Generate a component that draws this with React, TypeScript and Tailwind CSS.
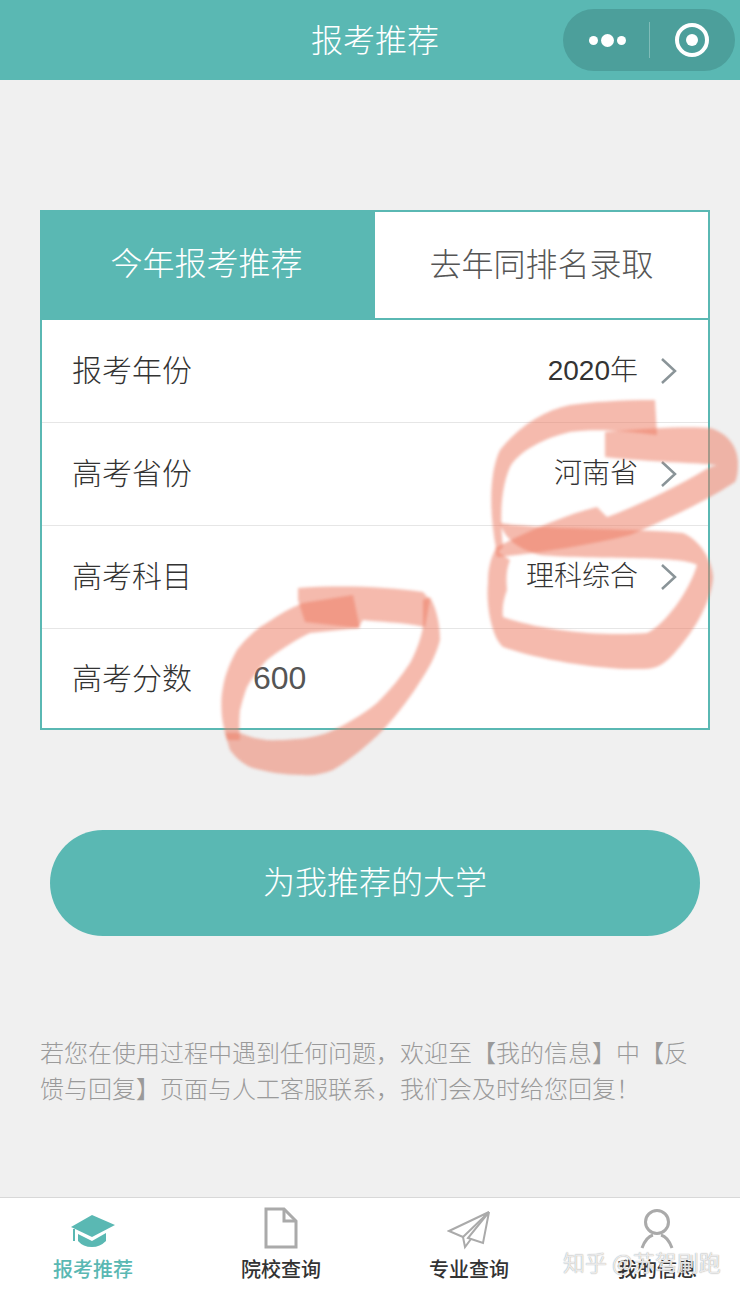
const rows = [
  { label: '报考年份', value: '2020年' },
  { label: '高考省份', value: '河南省' },
  { label: '高考科目', value: '理科综合' },
];

function Chevron() {
  return (
    <svg width="18" height="28" viewBox="0 0 18 28" fill="none" className="ml-[22px] mr-[30px]">
      <path d="M2 2 L15 14 L2 26" stroke="#8a9498" strokeWidth="2.5" />
    </svg>
  );
}

function CapIcon() {
  return (
    <svg width="46" height="36" viewBox="0 0 46 36" fill="#5ab8b3">
      <path d="M22 1 L45 11 L22 23 L1 13 Z" />
      <path d="M8 20 L22 27 L36 19 L36 27 Q30 33 22 33 Q13 33 8 27 Z" />
      <rect x="3" y="15" width="2" height="12" />
    </svg>
  );
}

function FileIcon() {
  return (
    <svg width="36" height="44" viewBox="0 0 36 44" fill="none" stroke="#aaaaaa" strokeWidth="3">
      <path d="M3 3 H21 L33 15 V41 H3 Z" />
      <path d="M21 3 V15 H33" />
    </svg>
  );
}

function PlaneIcon() {
  return (
    <svg width="44" height="40" viewBox="0 0 44 40" fill="none" stroke="#aaaaaa" strokeWidth="2">
      <path d="M42 2 L2 21 L16 27 Z" />
      <path d="M42 2 L36 33 L21 28 L42 2" />
      <path d="M16 27 L18 37 L24 29" />
    </svg>
  );
}

function UserIcon() {
  return (
    <svg width="36" height="42" viewBox="0 0 36 42" fill="none" stroke="#aaaaaa" strokeWidth="3">
      <circle cx="18" cy="14" r="11.5" />
      <path d="M3 40 Q7 29 14 27 M33 40 Q29 29 22 27" />
    </svg>
  );
}

const tabs = [
  { label: '报考推荐', icon: <CapIcon />, active: true },
  { label: '院校查询', icon: <FileIcon /> },
  { label: '专业查询', icon: <PlaneIcon /> },
  { label: '我的信息', icon: <UserIcon /> },
];

// hand drawn marker strokes on top of the form
function Scribbles() {
  return (
    <svg width="740" height="1294" viewBox="0 0 740 1294" fill="#ec7a62" fillOpacity="0.52" className="absolute inset-0 pointer-events-none blur-[1.5px]">
      <path d="M655 400 C 620 400, 590 402, 570 405 C 545 410, 520 425, 500 450 C 490 470, 488 510, 497 553 L 503 547 C 500 520, 500 490, 510 467 C 520 450, 545 438, 570 432 C 600 428, 630 432, 657 435 Z" />
      <path d="M605 432 C 650 428, 690 426, 710 428 C 725 432, 738 445, 738 463 C 738 472, 737 478, 735 482 C 700 505, 660 522, 630 535 C 590 545, 540 553, 497 557 L 495 548 C 530 530, 565 515, 597 507 L 607 517 C 640 505, 680 485, 708 468 L 717 465 C 700 463, 650 462, 605 457 Z" />
      <path d="M500 523 C 550 530, 640 528, 683 533 C 700 540, 712 560, 713 577 C 712 600, 695 630, 677 650 C 665 665, 655 670, 640 669 C 600 670, 540 660, 503 647 C 490 635, 486 600, 488 583 C 488 570, 490 560, 495 550 L 510 560 C 506 570, 506 580, 507 590 C 503 600, 502 610, 503 617 C 540 630, 600 637, 647 633 C 665 625, 690 590, 697 565 C 680 555, 600 560, 540 555 C 520 550, 505 540, 500 523 Z" />
      <path d="M298 588 C 340 585, 390 587, 423 592 L 430 600 L 425 627 C 400 622, 380 622, 363 620 L 358 628 L 305 622 L 298 600 Z" />
      <path d="M353 595 L 303 603 C 285 610, 275 618, 260 627 C 250 635, 243 642, 237 650 C 230 662, 225 675, 223 687 C 221 697, 221 707, 222 717 C 223 725, 225 733, 227 740 L 240 740 C 239 730, 239 720, 240 710 C 242 702, 244 695, 247 687 C 253 677, 259 668, 267 660 C 280 650, 295 640, 310 633 L 360 628 Z" />
      <path d="M430 597 C 437 610, 440 625, 440 640 C 437 652, 431 665, 423 677 C 412 695, 398 714, 383 730 C 368 745, 350 760, 333 770 C 323 774, 313 776, 303 775 C 285 775, 265 772, 250 767 C 242 763, 235 757, 230 750 L 225 733 L 240 733 C 252 738, 265 741, 277 740 C 295 740, 312 738, 327 733 C 345 725, 362 715, 377 703 C 390 690, 401 677, 410 663 C 417 650, 421 638, 423 627 L 423 600 Z" />
    </svg>
  );
}

export default function App() {
  return (
    <div className="relative flex flex-col w-[740px] h-[1294px] overflow-hidden bg-[#f0f0f0] font-['Noto_Sans_CJK_SC','Noto_Sans',sans-serif]">
      <header className="relative flex items-center justify-center h-20 shrink-0 pb-1 bg-[#5ab8b3] text-[32px] font-light text-white">
        <span className="ml-[10px]">报考推荐</span>
        <div className="absolute left-[563px] top-[9px] flex items-center w-[172px] h-[62px] rounded-full bg-[#4c9f9b]">
          <div className="flex w-[86px] items-center justify-center gap-[3px] pl-[2px]">
            <span className="w-[9px] h-[9px] rounded-full bg-white" />
            <span className="w-[13px] h-[13px] rounded-full bg-white" />
            <span className="w-[9px] h-[9px] rounded-full bg-white" />
          </div>
          <div className="w-px h-9 bg-[#7fbcb8]" />
          <div className="flex flex-1 items-center justify-center pr-[1px]">
            <div className="flex items-center justify-center w-[34px] h-[34px] rounded-full border-4 border-white">
              <span className="w-3 h-3 rounded-full bg-white" />
            </div>
          </div>
        </div>
      </header>

      <main className="flex-1 px-10 pt-[130px]">
        <div className="w-[670px] h-[520px] border-2 border-[#5ab8b3] bg-white">
          <div className="flex h-[108px] text-[32px] font-light">
            <div className="flex flex-1 items-center justify-center pr-1 pb-[10px] bg-[#5ab8b3] text-white">今年报考推荐</div>
            <div className="flex w-[333px] items-center justify-center pb-[6px] border-b-2 border-[#5ab8b3] text-[#555555]">去年同排名录取</div>
          </div>
          {rows.map((row) => (
            <div key={row.label} className="flex items-center h-[103px] pl-[30px] border-b border-[#e6e6e6] text-[#333333]">
              <span className="pb-[6px] text-[30px] font-light">{row.label}</span>
              <span className="ml-auto text-[28px] font-light font-['Liberation_Sans','Noto_Sans_CJK_SC',sans-serif]">{row.value}</span>
              <Chevron />
            </div>
          ))}
          <div className="flex items-center h-[99px] pl-[30px] text-[#333333]">
            <span className="pb-[4px] text-[30px] font-light">高考分数</span>
            <span className="ml-[61px] pb-[2px] text-[32px] font-['Liberation_Sans',sans-serif] text-[#555555]">600</span>
          </div>
        </div>

        <button className="flex items-center justify-center w-[650px] h-[106px] mt-[100px] ml-[10px] pb-[6px] rounded-full bg-[#5ab8b3] text-[32px] font-light text-white">
          为我推荐的大学
        </button>

        <p className="mt-[98px] text-[24px] font-light leading-[36px] text-[#9a9a9a]">
          若您在使用过程中遇到任何问题，欢迎至【我的信息】中【反馈与回复】页面与人工客服联系，我们会及时给您回复！
        </p>
      </main>

      <nav className="grid grid-cols-[repeat(4,188px)] h-[97px] shrink-0 -ml-[1px] bg-white border-t border-[#d8d8d8]">
        {tabs.map((tab) => (
          <div key={tab.label} className="flex flex-col items-center">
            <div className="flex items-end justify-center h-[52px]">{tab.icon}</div>
            <span className={`mt-[4px] text-[20px] leading-[30px] font-medium ${tab.active ? 'text-[#5ab8b3]' : 'text-[#333333]'}`}>{tab.label}</span>
          </div>
        ))}
      </nav>

      <Scribbles />
      <span className="absolute left-[563px] top-[1246px] text-[22px] leading-[30px] text-white/80 [text-shadow:0_0_1px_#888]">知乎 @苏驾刷跑</span>
    </div>
  );
}
